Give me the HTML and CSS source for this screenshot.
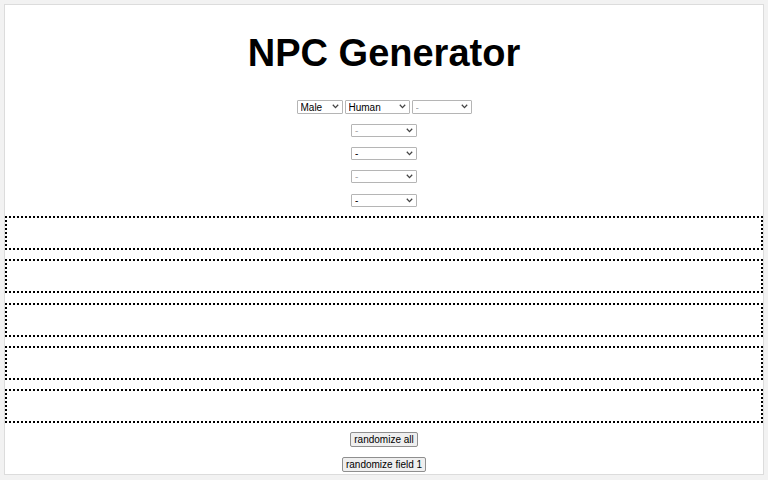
FILE: index.html
```html
<!DOCTYPE html>
<html>
<head>
<meta charset="utf-8">
<title>NPC Generator</title>
<link rel="stylesheet" href="styles.css">
</head>
<body>
<div class="panel">
  <h1 class="title">NPC Generator</h1>
  <div class="row">
    <span class="wrap w-gender"><select class="sel"><option>Male</option><option>Female</option></select><svg class="chev" viewBox="0 0 7 5"><path d="M0.8 0.8 L3.5 3.6 L6.2 0.8" fill="none" stroke="#444" stroke-width="1.3"/></svg></span>
    <span class="wrap w-race"><select class="sel"><option>Human</option><option>Elf</option></select><svg class="chev" viewBox="0 0 7 5"><path d="M0.8 0.8 L3.5 3.6 L6.2 0.8" fill="none" stroke="#444" stroke-width="1.3"/></svg></span>
    <span class="wrap w-dash"><select class="sel light"><option>-</option></select><svg class="chev" viewBox="0 0 7 5"><path d="M0.8 0.8 L3.5 3.6 L6.2 0.8" fill="none" stroke="#444" stroke-width="1.3"/></svg></span>
  </div>
  <span class="wrap w-col"><select class="sel light"><option>-</option></select><svg class="chev" viewBox="0 0 7 5"><path d="M0.8 0.8 L3.5 3.6 L6.2 0.8" fill="none" stroke="#444" stroke-width="1.3"/></svg></span>
  <span class="wrap w-col"><select class="sel"><option>-</option></select><svg class="chev" viewBox="0 0 7 5"><path d="M0.8 0.8 L3.5 3.6 L6.2 0.8" fill="none" stroke="#444" stroke-width="1.3"/></svg></span>
  <span class="wrap w-col"><select class="sel light"><option>-</option></select><svg class="chev" viewBox="0 0 7 5"><path d="M0.8 0.8 L3.5 3.6 L6.2 0.8" fill="none" stroke="#444" stroke-width="1.3"/></svg></span>
  <span class="wrap w-col w-last"><select class="sel"><option>-</option></select><svg class="chev" viewBox="0 0 7 5"><path d="M0.8 0.8 L3.5 3.6 L6.2 0.8" fill="none" stroke="#444" stroke-width="1.3"/></svg></span>
  <div class="field first"></div>
  <div class="field"></div>
  <div class="field"></div>
  <div class="field"></div>
  <div class="field"></div>
  <button class="btn btn-all">randomize all</button>
  <button class="btn btn-field">randomize field 1</button>
</div>
</body>
</html>
```
FILE: styles.css
```css
html, body {
  margin: 0;
  padding: 0;
  background: #f2f2f2;
}
body {
  padding: 4px 4px 0 4px;
  font-family: "Liberation Sans", Arial, sans-serif;
}
.panel {
  background: #ffffff;
  border: 1px solid #dcdcdc;
  height: 471px;
  box-sizing: border-box;
  display: flex;
  flex-direction: column;
  align-items: center;
}
.title {
  font-family: "Liberation Sans", Arial, sans-serif;
  font-weight: bold;
  font-size: 38px;
  line-height: 44px;
  margin: 26px 0 0 0;
  color: #000;
}
.row {
  display: flex;
  gap: 2px;
  margin-top: 25px;
}
.wrap {
  position: relative;
  display: block;
  height: 14px;
}
.sel {
  appearance: none;
  -webkit-appearance: none;
  display: block;
  width: 100%;
  height: 100%;
  font-family: "Liberation Sans", Arial, sans-serif;
  font-size: 10px;
  line-height: 11px;
  padding: 0 0 0 3px;
  margin: 0;
  border: 1px solid #b5b5b5;
  border-radius: 1px;
  background: #fff;
  color: #000;
  box-sizing: border-box;
}
.sel.light { color: #a8a8a8; }
.chev {
  position: absolute;
  right: 4px;
  top: 4px;
  width: 7px;
  height: 5px;
  pointer-events: none;
}
.w-gender { width: 46px; }
.w-race { width: 65px; }
.w-dash { width: 60px; }
.w-col {
  width: 66px;
  height: 13px;
  margin-top: 10px;
}
.w-last { margin-top: 11px; }
.field {
  align-self: stretch;
  height: 34px;
  border: 2px dotted #000;
  box-sizing: border-box;
  margin-top: 9.3px;
}
.field.first { margin-top: 9px; }
.btn {
  font-family: "Liberation Sans", Arial, sans-serif;
  font-size: 10px;
  line-height: 11px;
  height: 15px;
  padding: 1px 3px;
  background: #efefef;
  border: 1px solid #8f8f8f;
  border-radius: 2px;
  color: #000;
  box-sizing: border-box;
}
.btn-all { margin-top: 9px; }
.btn-field { margin-top: 10px; }
```
